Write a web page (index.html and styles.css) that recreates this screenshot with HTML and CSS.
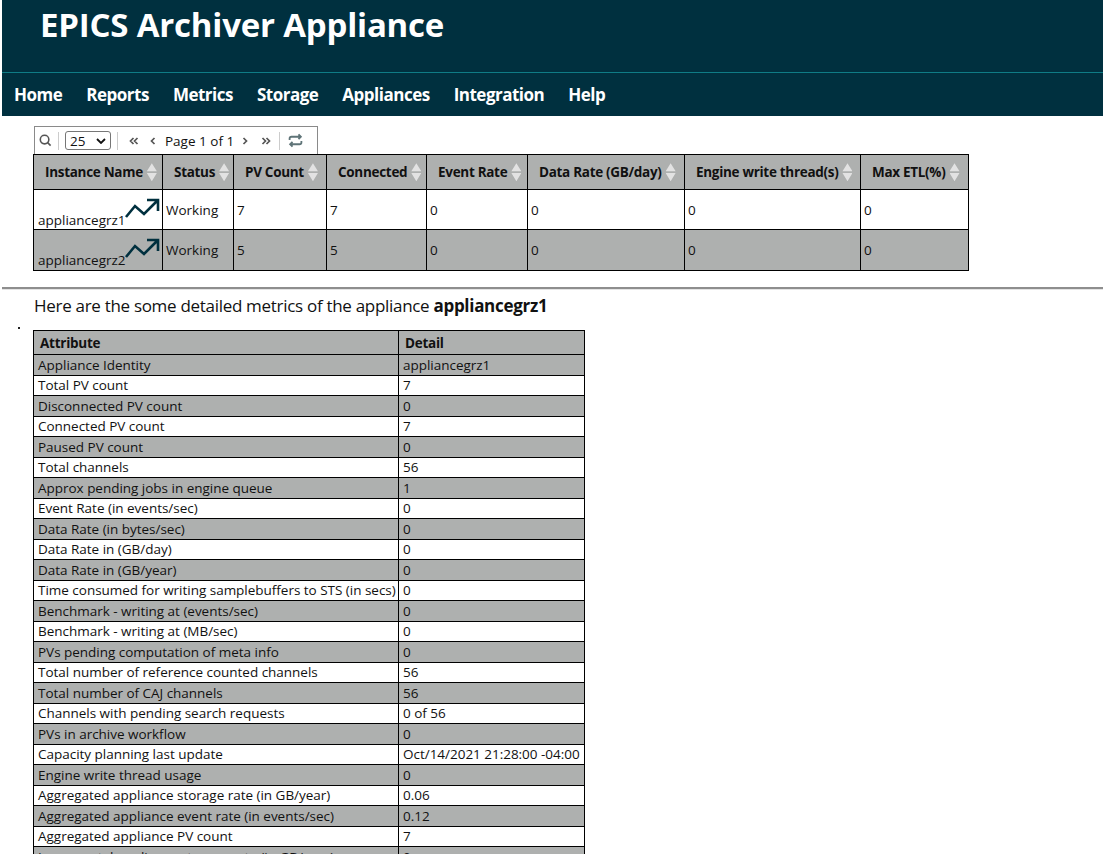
FILE: index.html
```html
<!DOCTYPE html>
<html lang="en">
<head>
    <meta charset="UTF-8">
    <meta name="viewport" content="width=device-width, initial-scale=1.0">
    <title>EPICS Archiver Appliance</title>
    <link rel="stylesheet" href="styles.css">
</head>
<body>
    <div class="page">
        <div class="header">
            <h1>EPICS Archiver Appliance</h1>
        </div>
        <div class="nav">
            <a>Home</a>
            <a>Reports</a>
            <a>Metrics</a>
            <a>Storage</a>
            <a>Appliances</a>
            <a>Integration</a>
            <a>Help</a>
        </div>

        <div class="content">
            <div class="pager">
                <svg class="ico search" viewBox="0 0 14 14"><circle cx="6" cy="6" r="4.6"></circle><path d="M9.300 9.300l3.200 3.200"></path></svg>
                <span class="sep"></span>
                <span class="select">25<svg viewBox="0 0 10 6"><path d="M1 1l4 4 4-4"></path></svg></span>
                <span class="sep"></span>
                <svg class="ico nav-ico first" viewBox="0 0 10 10"><path d="M4.500 2L1.500 5l3 3M8.500 2l-3 3 3 3"></path></svg>
                <svg class="ico nav-ico prev" viewBox="0 0 10 10"><path d="M6.500 2l-3 3 3 3"></path></svg>
                <span class="page-label">Page 1 of 1</span>
                <svg class="ico nav-ico next" viewBox="0 0 10 10"><path d="M3.500 2l3 3-3 3"></path></svg>
                <svg class="ico nav-ico last" viewBox="0 0 10 10"><path d="M1.500 2l3 3-3 3M5.500 2l3 3-3 3"></path></svg>
                <span class="sep"></span>
                <svg class="ico refresh" viewBox="0 0 14 14"><path d="M1.500 6.500V5.200C1.500 4 2.300 3.500 3.300 3.500h8.500M9.800 1.300l2.200 2.200-2.200 2.200M12.500 7.500v1.300c0 1.200-.8 1.700-1.800 1.700H2.200M4.200 8.300L2 10.500l2.200 2.200"></path></svg>
            </div>

            <table class="summary">
                <colgroup>
                    <col class="c1"><col class="c2"><col class="c3"><col class="c4">
                    <col class="c5"><col class="c6"><col class="c7"><col class="c8">
                </colgroup>
                <thead>
                    <tr>
                        <th><span>Instance Name</span><i class="sort"></i></th>
                        <th><span>Status</span><i class="sort"></i></th>
                        <th><span>PV Count</span><i class="sort"></i></th>
                        <th><span>Connected</span><i class="sort"></i></th>
                        <th><span>Event Rate</span><i class="sort"></i></th>
                        <th><span>Data Rate (GB/day)</span><i class="sort"></i></th>
                        <th><span>Engine write thread(s)</span><i class="sort"></i></th>
                        <th><span>Max ETL(%)</span><i class="sort"></i></th>
                    </tr>
                </thead>
                <tbody>
                    <tr>
                        <td class="instance">appliancegrz1<svg class="trend" viewBox="0 0 36 22"><path d="M2 19L11 8l9 8L33 3M23 2h11v11"></path></svg></td>
                        <td>Working</td><td>7</td><td>7</td><td>0</td><td>0</td><td>0</td><td>0</td>
                    </tr>
                    <tr class="odd">
                        <td class="instance">appliancegrz2<svg class="trend" viewBox="0 0 36 22"><path d="M2 19L11 8l9 8L33 3M23 2h11v11"></path></svg></td>
                        <td>Working</td><td>5</td><td>5</td><td>0</td><td>0</td><td>0</td><td>0</td>
                    </tr>
                </tbody>
            </table>
        </div>

        <hr class="rule">

        <p class="intro">Here are the some detailed metrics of the appliance <b>appliancegrz1</b></p>
        <div class="dot"></div>

        <table class="details">
            <colgroup><col class="attr"><col class="val"></colgroup>
            <thead>
                <tr><th>Attribute</th><th>Detail</th></tr>
            </thead>
            <tbody>
                <tr><td>Appliance Identity</td><td>appliancegrz1</td></tr>
                <tr><td>Total PV count</td><td>7</td></tr>
                <tr><td>Disconnected PV count</td><td>0</td></tr>
                <tr><td>Connected PV count</td><td>7</td></tr>
                <tr><td>Paused PV count</td><td>0</td></tr>
                <tr><td>Total channels</td><td>56</td></tr>
                <tr><td>Approx pending jobs in engine queue</td><td>1</td></tr>
                <tr><td>Event Rate (in events/sec)</td><td>0</td></tr>
                <tr><td>Data Rate (in bytes/sec)</td><td>0</td></tr>
                <tr><td>Data Rate in (GB/day)</td><td>0</td></tr>
                <tr><td>Data Rate in (GB/year)</td><td>0</td></tr>
                <tr><td>Time consumed for writing samplebuffers to STS (in secs)</td><td>0</td></tr>
                <tr><td>Benchmark - writing at (events/sec)</td><td>0</td></tr>
                <tr><td>Benchmark - writing at (MB/sec)</td><td>0</td></tr>
                <tr><td>PVs pending computation of meta info</td><td>0</td></tr>
                <tr><td>Total number of reference counted channels</td><td>56</td></tr>
                <tr><td>Total number of CAJ channels</td><td>56</td></tr>
                <tr><td>Channels with pending search requests</td><td>0 of 56</td></tr>
                <tr><td>PVs in archive workflow</td><td>0</td></tr>
                <tr><td>Capacity planning last update</td><td>Oct/14/2021 21:28:00 -04:00</td></tr>
                <tr><td>Engine write thread usage</td><td>0</td></tr>
                <tr><td>Aggregated appliance storage rate (in GB/year)</td><td>0.06</td></tr>
                <tr><td>Aggregated appliance event rate (in events/sec)</td><td>0.12</td></tr>
                <tr><td>Aggregated appliance PV count</td><td>7</td></tr>
                <tr><td>Incremental appliance storage rate (in GB/year)</td><td>0</td></tr>
            </tbody>
        </table>
    </div>
</body>
</html>
```

FILE: styles.css
```css
* {
    box-sizing: border-box;
}
html, body {
    margin: 0;
    padding: 0;
    height: 100%;
    overflow: hidden;
    background-color: #fff;
}
body {
    font-family: "Open Sans", "Noto Sans", sans-serif;
    font-size: 13.5px;
    color: #111;
}
.page {
    height: 854px;
    overflow: hidden;
}

/* header and menu */
.header {
    margin-left: 2px;
    height: 73px;
    padding: 4px 0 0 38px;
    background-color: #00303f;
    border-bottom: 1px solid #0f7c86;
}
.header h1 {
    margin: 0;
    font-size: 33px;
    line-height: 42px;
    font-weight: 700;
    color: #fff;
    letter-spacing: -0.2px;
}
.nav {
    margin-left: 2px;
    height: 43px;
    padding-left: 12px;
    display: flex;
    align-items: center;
    gap: 24px;
    background-color: #00303f;
}
.nav a {
    font-size: 17px;
    font-weight: 700;
    color: #fff;
    letter-spacing: -0.5px;
}

/* table tools */
.content {
    padding: 10px 0 0 33px;
}
.pager {
    margin-left: 1px;
    width: 284px;
    height: 28px;
    padding-left: 4px;
    display: flex;
    align-items: center;
    border: 1px solid #8a8a8a;
    border-bottom: none;
    background-color: #fff;
}
.ico {
    fill: none;
    stroke: #555;
    stroke-width: 1.7;
}
.search {
    width: 13px;
    height: 13px;
}
.sep {
    width: 1px;
    height: 18px;
    margin: 0 6px;
    background-color: #ccc;
}
.select {
    width: 46px;
    height: 19px;
    padding-left: 4px;
    display: flex;
    align-items: center;
    justify-content: space-between;
    padding-right: 4px;
    border: 1px solid #767676;
    border-radius: 3px;
    font-size: 13.5px;
}
.select svg {
    width: 10px;
    height: 6px;
    fill: none;
    stroke: #111;
    stroke-width: 1.8;
}
.nav-ico {
    width: 10px;
    height: 10px;
}
.first {
    margin-left: 5px;
}
.prev {
    margin-left: 9px;
}
.page-label {
    margin: 0 6px 0 7px;
    font-size: 13.5px;
    letter-spacing: 0;
}
.last {
    margin: 0 2px 0 11px;
}
.refresh {
    width: 15px;
    height: 15px;
    stroke: #5f7478;
    margin-left: 2px;
}

/* summary table */
table {
    border-collapse: collapse;
    table-layout: fixed;
}
.summary {
    width: 935px;
    margin-left: 0;
}
.c1 { width: 129px; }
.c2 { width: 71px; }
.c3 { width: 93px; }
.c4 { width: 100px; }
.c5 { width: 101px; }
.c6 { width: 157px; }
.c7 { width: 176px; }
.c8 { width: 108px; }

.summary th, .summary td {
    border: 1px solid #000;
    padding: 0 3px;
    text-align: left;
}
.summary th {
    height: 35px;
    padding: 0 1px 1px 11px;
    background-color: #aeb0af;
    font-size: 13.5px;
    font-weight: 700;
    letter-spacing: -0.3px;
    white-space: nowrap;
}
.summary th span {
    vertical-align: middle;
}
.summary td {
    height: 40px;
    font-size: 13.5px;
}
.summary .odd td {
    height: 41px;
    background-color: #aeb0af;
}
.sort {
    display: inline-block;
    width: 10px;
    height: 18px;
    margin-left: 4px;
    vertical-align: middle;
    background-color: #e2e2e2;
    clip-path: polygon(50% 0, 100% 45%, 0 45%, 0 55%, 100% 55%, 50% 100%, 0 55%, 0 45%);
}
.summary td.instance {
    white-space: nowrap;
    padding: 20px 0 0 4px;
    position: relative;
}
.trend {
    position: absolute;
    left: 90px;
    top: 8px;
    width: 36px;
    height: 22px;
    fill: none;
    stroke: #00303f;
    stroke-width: 2.6;
}

.rule {
    margin: 16px 0 0 2px;
    height: 2px;
    border: none;
    background-color: #8e8e8e;
    box-shadow: 0 1px 0 #e4e4e4;
}
.intro {
    margin: 6px 0 0 34px;
    font-size: 17px;
    line-height: 22px;
    letter-spacing: -0.3px;
}
.dot {
    width: 2px;
    height: 2px;
    margin: 10px 0 0 18px;
    background-color: #222;
}

/* details table */
.details {
    width: 551px;
    margin: 1px 0 0 33px;
}
.attr { width: 365px; }
.val { width: 186px; }
.details th, .details td {
    border: 1px solid #000;
    text-align: left;
    white-space: nowrap;
    overflow: hidden;
}
.details th {
    height: 24px;
    padding: 0 6px;
    background-color: #aeb0af;
    font-size: 13.5px;
    font-weight: 700;
    letter-spacing: -0.25px;
}
.details td {
    height: 20.5px;
    padding: 0 4px;
    font-size: 13.5px;
    line-height: 16px;
    letter-spacing: -0.02px;
}
.details tbody tr:nth-child(odd) td {
    background-color: #aeb0af;
}
```
